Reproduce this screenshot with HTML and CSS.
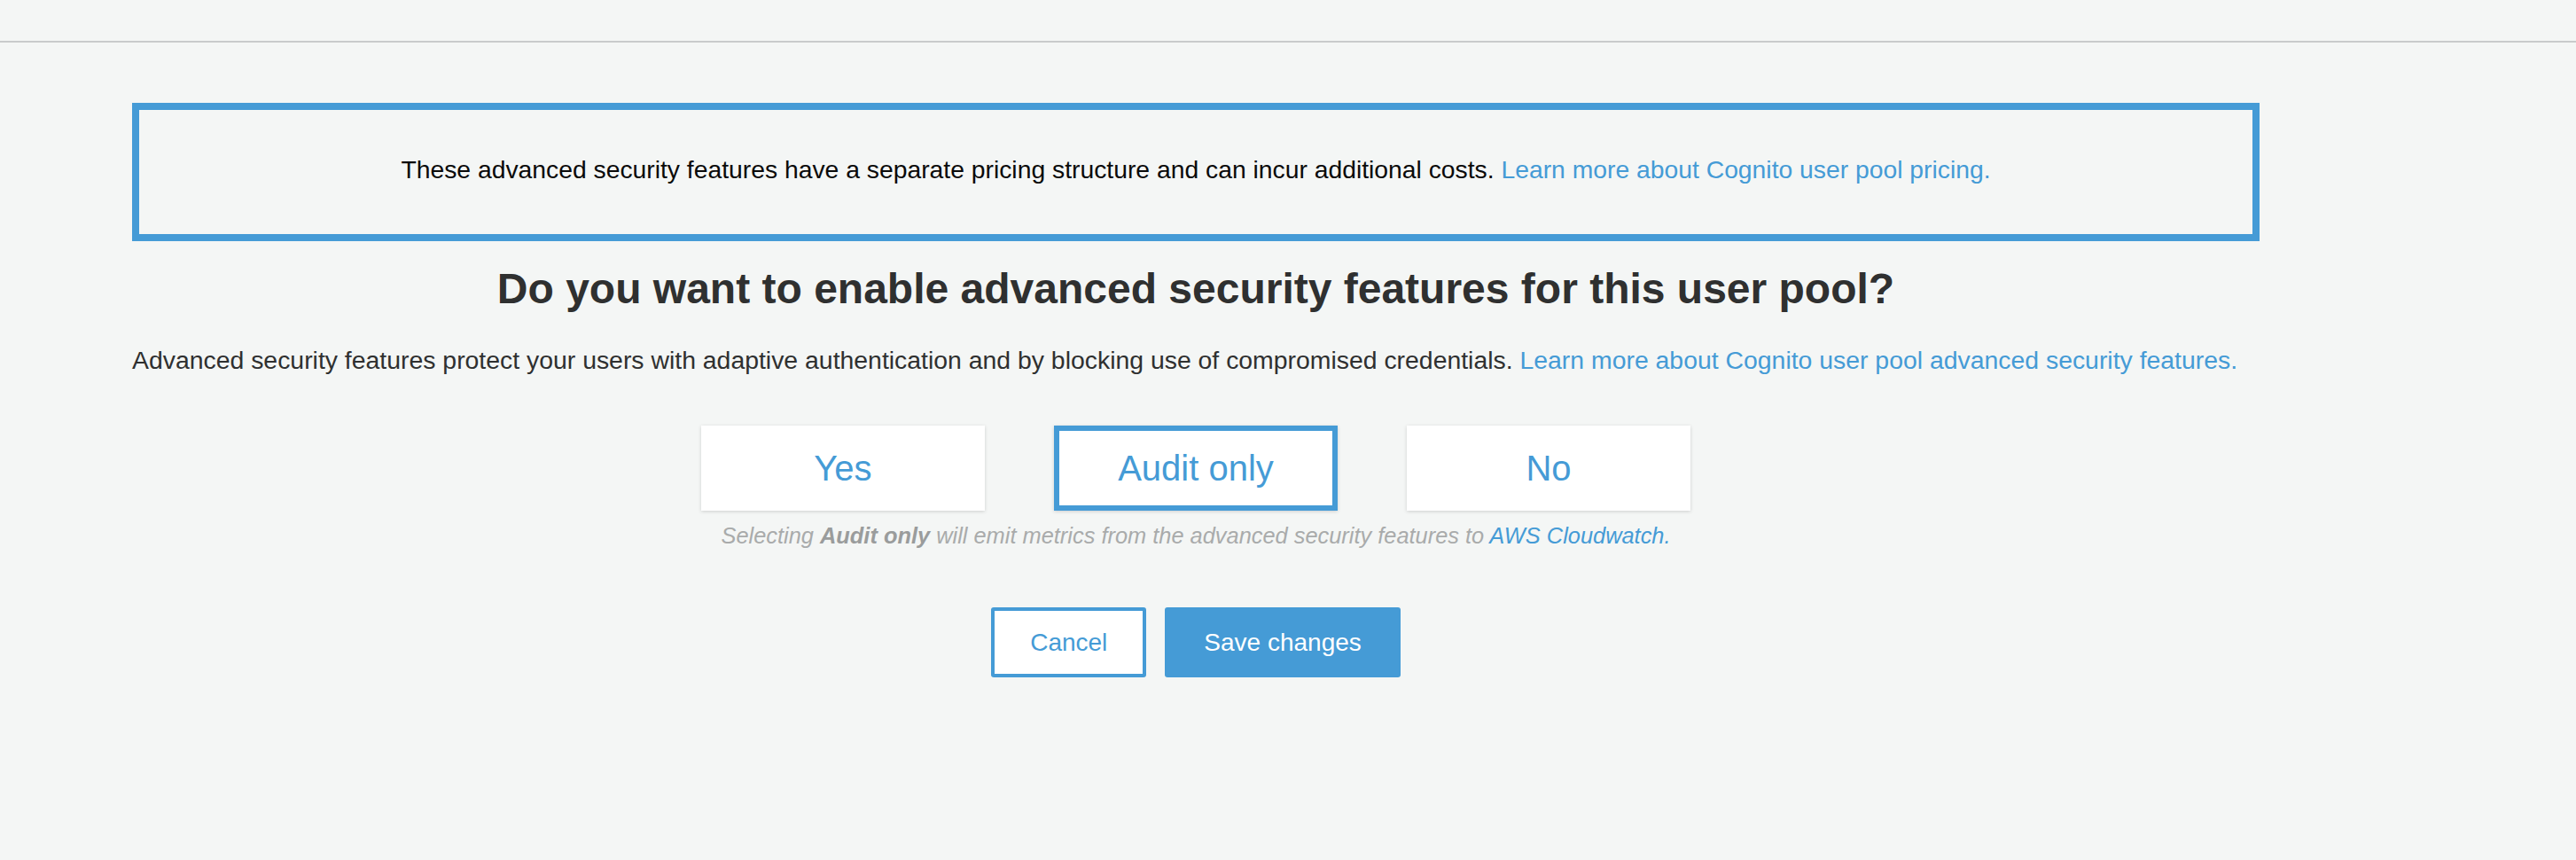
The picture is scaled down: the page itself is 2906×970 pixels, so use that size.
FILE: index.html
```html
<!DOCTYPE html>
<html lang="en">
<head>
<meta charset="utf-8">
<title>Advanced security</title>
<link rel="stylesheet" href="styles.css">
</head>
<body>
<div class="topbar"></div>
<main class="content">
  <div class="notice">
    <p class="notice-text">These advanced security features have a separate pricing structure and can incur additional costs. <a class="link" href="#">Learn more about Cognito user pool pricing.</a></p>
  </div>
  <h1 class="heading">Do you want to enable advanced security features for this user pool?</h1>
  <p class="desc">Advanced security features protect your users with adaptive authentication and by blocking use of compromised credentials. <a class="link" href="#">Learn more about Cognito user pool advanced security features.</a></p>
  <div class="options">
    <button class="option">Yes</button>
    <button class="option option-selected">Audit only</button>
    <button class="option">No</button>
  </div>
  <p class="caption">Selecting <b>Audit only</b> will emit metrics from the advanced security features to <a class="link" href="#">AWS Cloudwatch.</a></p>
  <div class="actions">
    <button class="btn btn-cancel">Cancel</button>
    <button class="btn btn-primary">Save changes</button>
  </div>
</main>
</body>
</html>
```
FILE: styles.css
```css
html, body {
  margin: 0;
  padding: 0;
  background: #f4f6f5;
  font-family: "Liberation Sans", Arial, Helvetica, sans-serif;
}

.topbar {
  height: 46px;
  border-bottom: 2px solid #c9cbcb;
}

.content {
  width: 2400px;
  margin-left: 149px;
  padding-top: 68px;
  display: flex;
  flex-direction: column;
  align-items: center;
}

.link {
  color: #459bd6;
  text-decoration: none;
}

.notice {
  box-sizing: border-box;
  width: 100%;
  height: 156px;
  padding-bottom: 5px;
  border: 8px solid #459bd6;
  display: flex;
  align-items: center;
  justify-content: center;
}

.notice-text {
  margin: 0;
  font-size: 28.3px;
  color: #0a0a0a;
}

.heading {
  margin: 26px 0 0;
  font-size: 48px;
  line-height: 56px;
  font-weight: bold;
  color: #2f3030;
  text-align: center;
}

.desc {
  align-self: stretch;
  margin: 34px 0 0;
  font-size: 28.4px;
  line-height: 36px;
  color: #2f3030;
}

.options {
  display: flex;
  gap: 78px;
  margin-top: 56px;
}

.option {
  box-sizing: border-box;
  width: 320px;
  height: 96px;
  border: none;
  background: #fff;
  color: #459bd6;
  font-family: inherit;
  font-size: 40px;
  box-shadow: 0 1px 4px rgba(0, 0, 0, 0.16);
  cursor: pointer;
}

.option-selected {
  border: 6px solid #459bd6;
}

.caption {
  margin: 12px 0 0;
  font-size: 25.4px;
  line-height: 32px;
  font-style: italic;
  color: #a9abab;
}

.caption b {
  color: #9a9c9c;
}

.actions {
  display: flex;
  gap: 21px;
  margin-top: 65px;
}

.btn {
  box-sizing: border-box;
  height: 79px;
  border-radius: 3px;
  font-family: inherit;
  font-size: 28px;
  cursor: pointer;
}

.btn-cancel {
  padding: 0 40px;
  background: #fff;
  color: #459bd6;
  border: 4px solid #459bd6;
}

.btn-primary {
  padding: 0 44px;
  background: #459bd6;
  color: #fff;
  border: none;
}
```
